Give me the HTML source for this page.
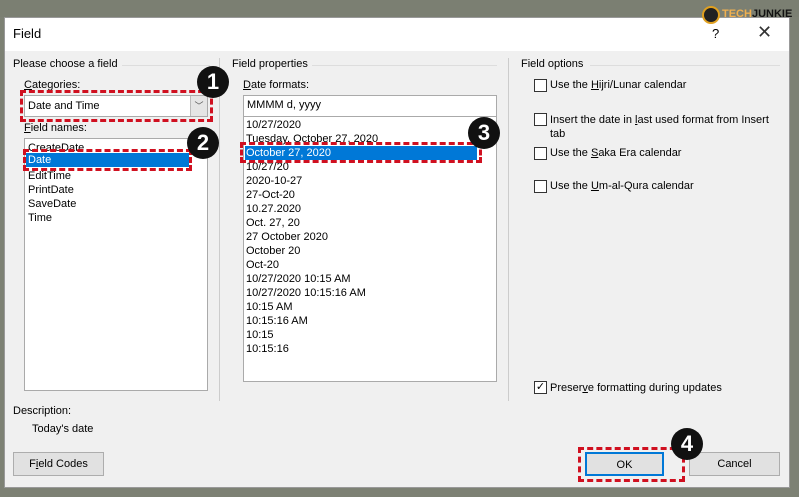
<!DOCTYPE html>
<html><head><style>
*{margin:0;padding:0;box-sizing:border-box}
body{width:799px;height:497px;position:relative;overflow:hidden;background:#7d8174;font-family:"Liberation Sans",sans-serif;font-size:11px;color:#000}
.a{position:absolute;white-space:nowrap}
.dlg{position:absolute;left:4px;top:17px;width:786px;height:471px;background:#f0f0f0;border:1px solid #999}
.tb{position:absolute;left:0;top:0;width:100%;height:33px;background:#fff}
.box{position:absolute;background:#fff;border:1px solid #aaa}
.sel{position:absolute;background:#0078d7;color:#fff}
.red{position:absolute;border:3px dashed #d01020}
.badge{position:absolute;width:32px;height:32px;border-radius:50%;background:#111;color:#fff;font:bold 22px "Liberation Sans",sans-serif;text-align:center;line-height:32px}
.cb{position:absolute;width:13px;height:13px;border:1px solid #333;background:#fff}
.btn{position:absolute;height:24px;background:#e1e1e1;border:1px solid #adadad;text-align:center;line-height:22px}
.hl{position:absolute;height:1px;background:#ddd}
.vl{position:absolute;width:1px;background:#ccc}
</style></head><body>
<div style="position:absolute;left:0;top:0;width:799px;height:17px;background:#7b7f72"></div>
<div class="dlg">
<div class="tb"></div>
</div>
<div class="a" style="left:13px;top:26px;font-size:13px">Field</div>
<div class="a" style="left:712px;top:26px;font-size:13px">?</div>
<div class="a" style="left:757px;top:22px;font-size:18px;color:#333">✕</div>
<div class="a" style="left:702px;top:6px;width:18px;height:18px;border-radius:50%;background:#222;border:2px solid #e0a020"></div>
<div class="a" style="left:722px;top:8px;font:bold 11px 'Liberation Sans',sans-serif"><span style="color:#f0b050">TECH</span><span style="color:#111">JUNKIE</span></div>

<div class="a" style="left:13px;top:58px">Please choose a field</div>
<div class="hl" style="left:122px;top:65px;width:88px"></div>
<div class="vl" style="left:219px;top:58px;height:343px"></div>
<div class="a" style="left:232px;top:58px">Field properties</div>
<div class="hl" style="left:312px;top:65px;width:185px"></div>
<div class="vl" style="left:508px;top:58px;height:343px"></div>
<div class="a" style="left:521px;top:58px">Field options</div>
<div class="hl" style="left:590px;top:65px;width:190px"></div>

<div class="a" style="left:24px;top:79px"><u>C</u>ategories:</div>
<div class="box" style="left:24px;top:95px;width:184px;height:22px"></div>
<div class="a" style="left:28px;top:100px">Date and Time</div>
<div class="a" style="left:190px;top:96px;width:17px;height:20px;background:#e5e5e5;border-left:1px solid #bbb;text-align:center;font-size:9px;line-height:20px;color:#555">﹀</div>
<div class="a" style="left:24px;top:122px"><u>F</u>ield names:</div>
<div class="box" style="left:24px;top:138px;width:184px;height:253px"></div>
<div class="a" style="left:28px;top:141px;line-height:14px">CreateDate<br><span style="color:#fff">Date</span><br>EditTime<br>PrintDate<br>SaveDate<br>Time</div>
<div class="sel" style="left:26px;top:153px;width:163px;height:14px;padding-left:2px;line-height:14px">Date</div>

<div class="a" style="left:243px;top:79px"><u>D</u>ate formats:</div>
<div class="box" style="left:243px;top:95px;width:254px;height:22px"></div>
<div class="a" style="left:247px;top:99px">MMMM d, yyyy</div>
<div class="box" style="left:243px;top:116px;width:254px;height:266px"></div>
<div class="a" style="left:246px;top:118px;line-height:14px">10/27/2020<br>Tuesday, October 27, 2020<br>&nbsp;<br>10/27/20<br>2020-10-27<br>27-Oct-20<br>10.27.2020<br>Oct. 27, 20<br>27 October 2020<br>October 20<br>Oct-20<br>10/27/2020 10:15 AM<br>10/27/2020 10:15:16 AM<br>10:15 AM<br>10:15:16 AM<br>10:15<br>10:15:16</div>
<div class="sel" style="left:245px;top:146px;width:232px;height:14px;padding-left:1px;line-height:14px">October 27, 2020</div>

<div class="cb" style="left:534px;top:79px"></div><div class="a" style="left:550px;top:79px">Use the <u>H</u>ijri/Lunar calendar</div>
<div class="cb" style="left:534px;top:113px"></div><div class="a" style="left:550px;top:113px;line-height:14px">Insert the date in <u>l</u>ast used format from Insert<br>tab</div>
<div class="cb" style="left:534px;top:147px"></div><div class="a" style="left:550px;top:147px">Use the <u>S</u>aka Era calendar</div>
<div class="cb" style="left:534px;top:180px"></div><div class="a" style="left:550px;top:180px">Use the <u>U</u>m-al-Qura calendar</div>
<div class="cb" style="left:534px;top:381px;font-size:11px;line-height:11px;text-align:center">✓</div><div class="a" style="left:550px;top:382px">Preser<u>v</u>e formatting during updates</div>

<div class="a" style="left:13px;top:405px">Description:</div>
<div class="a" style="left:32px;top:423px">Today's date</div>
<div class="btn" style="left:13px;top:452px;width:91px">F<u>i</u>eld Codes</div>
<div class="btn" style="left:585px;top:452px;width:79px;border:2px solid #0078d7">OK</div>
<div class="btn" style="left:689px;top:452px;width:91px">Cancel</div>

<div class="red" style="left:20px;top:90px;width:193px;height:32px"></div>
<div class="red" style="left:23px;top:149px;width:169px;height:22px"></div>
<div class="red" style="left:240px;top:142px;width:242px;height:21px"></div>
<div class="red" style="left:578px;top:447px;width:107px;height:35px"></div>
<div class="badge" style="left:197px;top:66px">1</div>
<div class="badge" style="left:187px;top:127px">2</div>
<div class="badge" style="left:468px;top:117px">3</div>
<div class="badge" style="left:671px;top:428px">4</div>
</body></html>
